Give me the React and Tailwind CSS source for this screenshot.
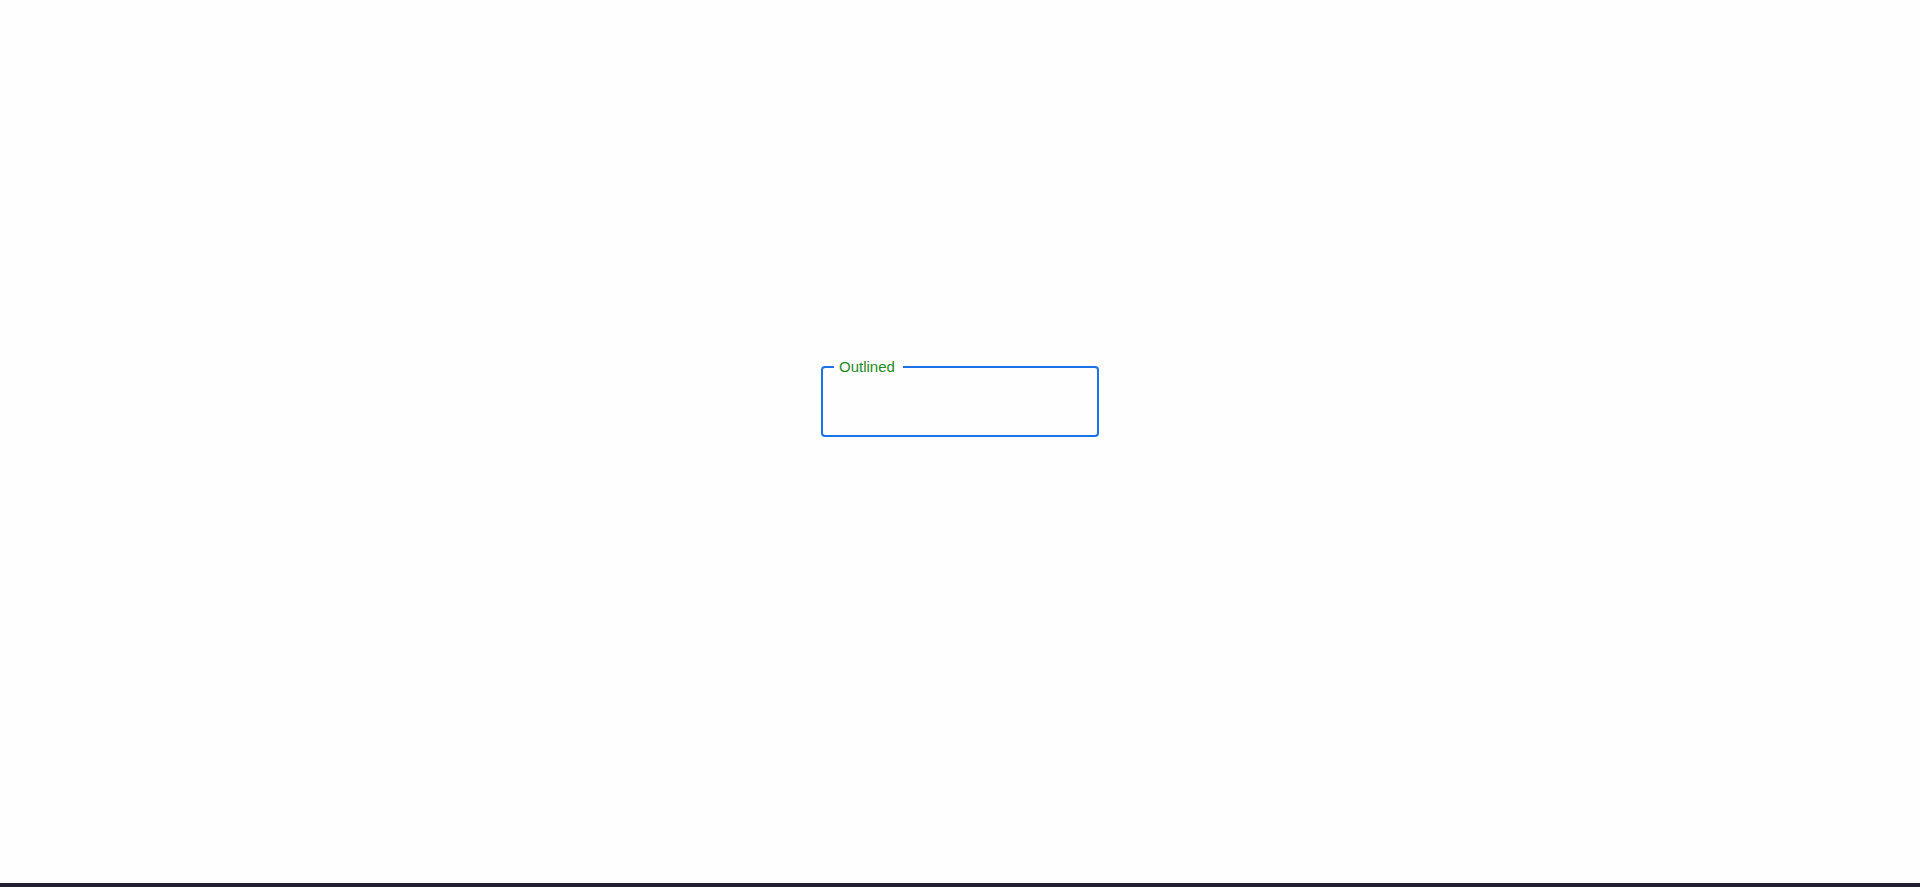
export default function App() {
  return (
    <div className="min-h-screen flex flex-col bg-[#fefefe]" style={{ fontFamily: '"Liberation Sans", Arial, sans-serif' }}>
      <main className="flex-1 flex justify-center items-start pt-[358px]">
        <fieldset className="w-[278px] border-2 border-[#1a73e8] rounded-[4px] m-0 p-0">
          <legend className="ml-[11px] pl-[5px] pr-[8px] text-[15px] leading-[17px] text-[#1e8a1e]">
            Outlined
          </legend>
          <div className="h-[60px]" />
        </fieldset>
      </main>
      <div className="h-[4px] bg-[#221f33]" />
    </div>
  );
}
